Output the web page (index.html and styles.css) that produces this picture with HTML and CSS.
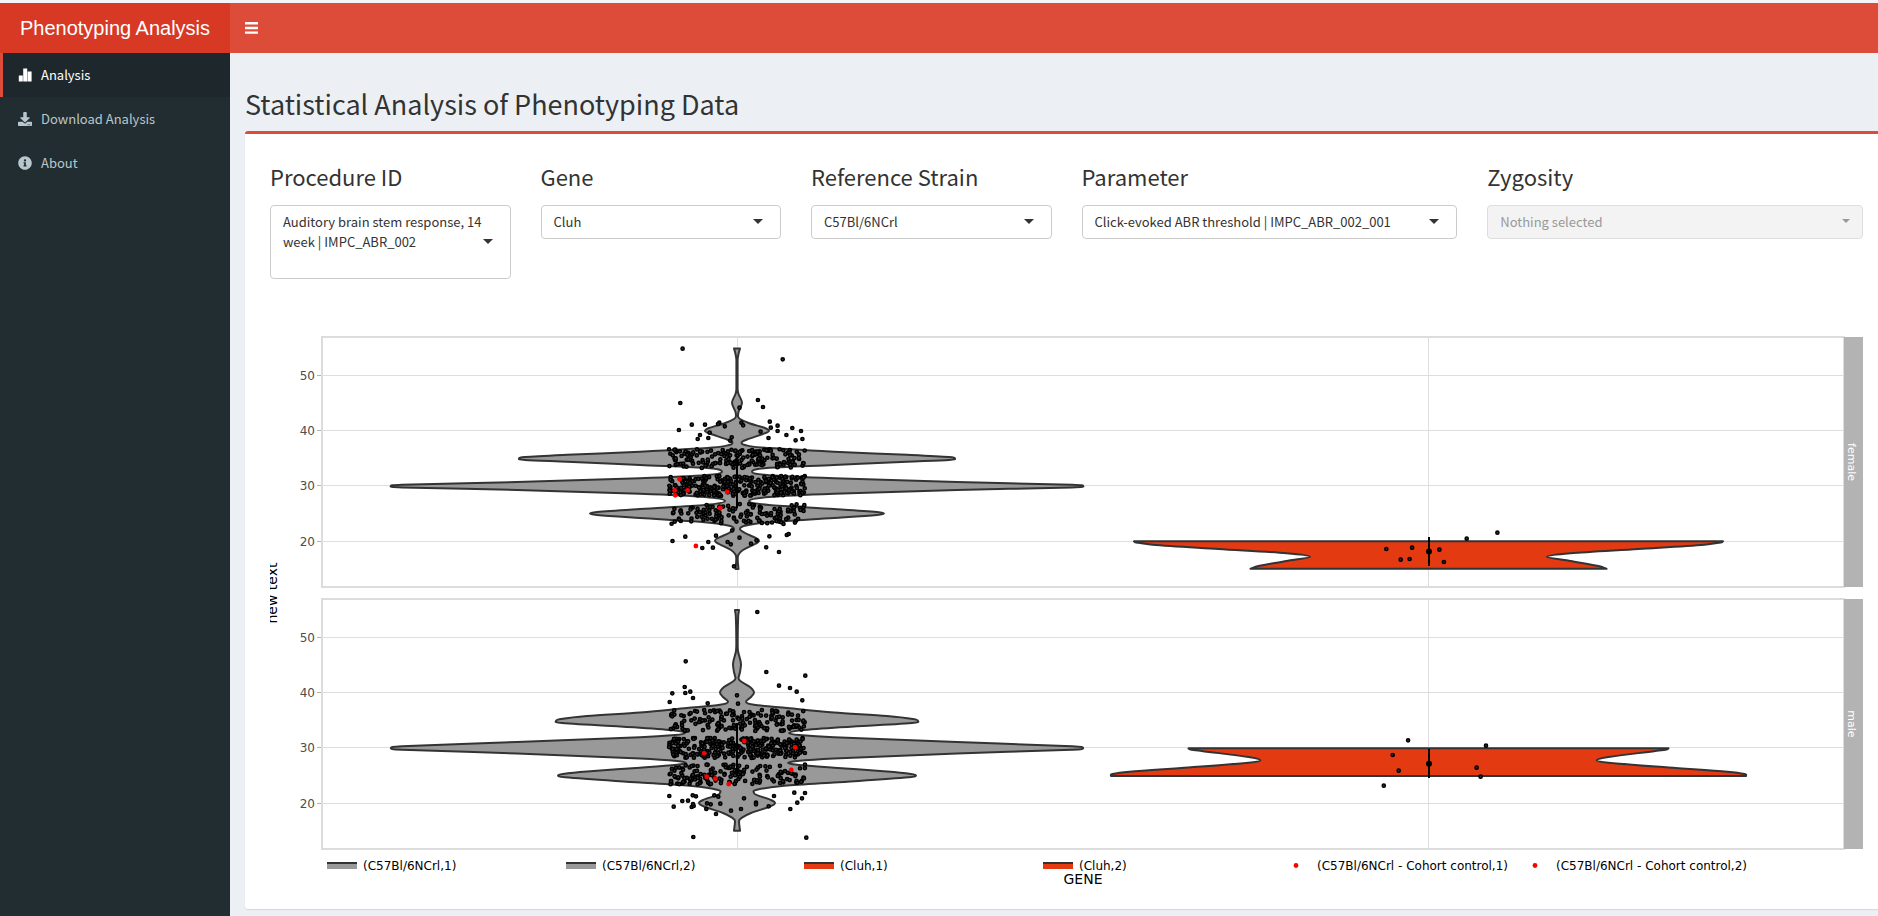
FILE: index.html
```html
<!DOCTYPE html>
<html lang="en">
<head>
<meta charset="utf-8">
<title>Phenotyping Analysis</title>
<link rel="stylesheet" href="styles.css">
</head>
<body>
<header class="topbar">
  <a class="logo" href="#">Phenotyping Analysis</a>
  <button class="toggle" type="button" aria-label="Toggle navigation">
    <svg class="toggle-icon" viewBox="0 0 13 12"><path d="M0 0h13v2.4H0zM0 4.8h13v2.4H0zM0 9.4h13v2.4H0z"/></svg>
  </button>
</header>
<div class="layout">
  <nav class="sidebar">
    <a class="nav-item active" href="#">
      <svg class="nav-icon" viewBox="0 0 14 14"><path d="M0.8 7.5h4v6h-4zM5.2 0.5h4v13h-4zM9.6 3.5h4v10h-4z"/></svg>Analysis</a>
    <a class="nav-item" href="#">
      <svg class="nav-icon" viewBox="0 0 512 512"><path d="M216 0h80c13.3 0 24 10.7 24 24v168h87.7c17.8 0 26.7 21.5 14.1 34.1L269.7 378.3c-7.5 7.5-19.8 7.5-27.3 0L90.1 226.1c-12.6-12.6-3.7-34.1 14.1-34.1H192V24c0-13.3 10.7-24 24-24zm296 376v112c0 13.3-10.7 24-24 24H24c-13.3 0-24-10.7-24-24V376c0-13.3 10.7-24 24-24h146.7l49 49c20.1 20.1 52.5 20.1 72.6 0l49-49H488c13.3 0 24 10.7 24 24zm-124 88c0-11-9-20-20-20s-20 9-20 20 9 20 20 20 20-9 20-20zm64 0c0-11-9-20-20-20s-20 9-20 20 9 20 20 20 20-9 20-20z"/></svg>Download Analysis</a>
    <a class="nav-item" href="#">
      <svg class="nav-icon" viewBox="0 0 512 512"><path d="M256 8C119.043 8 8 119.083 8 256c0 136.997 111.043 248 248 248s248-111.003 248-248C504 119.083 392.957 8 256 8zm0 110c23.196 0 42 18.804 42 42s-18.804 42-42 42-42-18.804-42-42 18.804-42 42-42zm56 254c0 6.627-5.373 12-12 12h-88c-6.627 0-12-5.373-12-12v-24c0-6.627 5.373-12 12-12h12v-64h-12c-6.627 0-12-5.373-12-12v-24c0-6.627 5.373-12 12-12h64c6.627 0 12 5.373 12 12v100h12c6.627 0 12 5.373 12 12v24z"/></svg>About</a>
  </nav>
  <main class="content">
    <h1 class="page-title">Statistical Analysis of Phenotyping Data</h1>
    <section class="box">
      <form class="filters">
        <div class="field">
          <label class="field-label" for="procedure">Procedure ID</label>
          <div class="picker picker-tall">
            <select class="picker-control" id="procedure"><option>Auditory brain stem response, 14 week | IMPC_ABR_002</option></select>
          </div>
        </div>
        <div class="field">
          <label class="field-label" for="gene">Gene</label>
          <div class="picker">
            <select class="picker-control" id="gene"><option>Cluh</option></select>
          </div>
        </div>
        <div class="field">
          <label class="field-label" for="strain">Reference Strain</label>
          <div class="picker">
            <select class="picker-control" id="strain"><option>C57Bl/6NCrl</option></select>
          </div>
        </div>
        <div class="field">
          <label class="field-label" for="parameter">Parameter</label>
          <div class="picker">
            <select class="picker-control" id="parameter"><option>Click-evoked ABR threshold | IMPC_ABR_002_001</option></select>
          </div>
        </div>
        <div class="field">
          <label class="field-label" for="zygosity">Zygosity</label>
          <div class="picker picker-disabled">
            <select class="picker-control" id="zygosity" disabled><option>Nothing selected</option></select>
          </div>
        </div>
      </form>
      <svg class="chart" id="chart" viewBox="270 320 1593 575" role="img" aria-label="Violin plot by gene and sex"></svg>
    </section>
  </main>
</div>
<script src="chart.js"></script>
</body>
</html>
```
FILE: styles.css
```css
* { box-sizing: border-box; }

body {
  margin: 0;
  min-height: 100vh;
  display: flex;
  flex-direction: column;
  background: #ecf0f5;
  color: #333;
  font-family: "Noto Sans CJK SC", "Noto Sans", sans-serif;
  font-size: 13px;
  line-height: 20px;
}

.topbar {
  display: flex;
  height: 53px;
  border-top: 3px solid #f3f5f8;
  background: #dd4b39;
}

.logo {
  width: 230px;
  background: #d73925;
  color: #fff;
  font-family: "Liberation Sans", Arial, sans-serif;
  font-size: 20px;
  line-height: 50px;
  text-align: center;
  text-decoration: none;
}

.toggle {
  display: flex;
  align-items: center;
  padding: 0 15px;
  border: 0;
  background: transparent;
}

.toggle-icon { width: 13px; height: 12px; fill: #fff; }

.layout { display: flex; flex: 1; }

.sidebar { width: 230px; flex-shrink: 0; background: #222d32; }

.nav-item {
  display: flex;
  align-items: center;
  gap: 9px;
  height: 44px;
  padding-left: 15px;
  border-left: 3px solid transparent;
  color: #b8c7ce;
  text-decoration: none;
}

.nav-item.active { border-left-color: #dd4b39; background: #1e282c; color: #fff; }

.nav-icon { width: 14px; height: 14px; fill: currentColor; }

.content { flex: 1; min-width: 0; padding: 31px 0 6px 15px; }

.page-title {
  margin: 0 0 7px;
  font-size: 27px;
  font-weight: 400;
  line-height: 40px;
}

.box {
  padding: 25px 0 13px 10px;
  border-top: 3px solid #dd4b39;
  border-radius: 3px 0 0 3px;
  background: #fff;
  box-shadow: 0 1px 1px rgba(0, 0, 0, 0.1);
}

.filters {
  display: grid;
  grid-template-columns: 2fr 2fr 2fr 3fr 3fr;
  align-items: start;
}

.field { min-width: 0; padding: 0 15px; }

.field-label {
  display: block;
  margin-bottom: 12px;
  font-size: 22px;
  line-height: 34px;
}

.picker { position: relative; }

.picker::after {
  content: "";
  position: absolute;
  top: 14px;
  right: 18px;
  border: 5px solid transparent;
  border-top-color: #333;
  border-bottom: 0;
  pointer-events: none;
}

.picker-control {
  display: block;
  width: 100%;
  height: 34px;
  padding: 6px 34px 6px 12px;
  border: 1px solid #ccc;
  border-radius: 4px;
  appearance: none;
  background: #fff;
  color: #333;
  font: inherit;
  white-space: normal;
}

.picker-tall::after { top: 34px; }

.picker-tall .picker-control { height: 74px; padding: 6px 28px 26px 12px; }

.picker-disabled::after { right: 13px; border-width: 4px 4px 0; border-top-color: #999; }

.picker-disabled .picker-control {
  border-color: #ddd;
  background: #f3f3f3;
  color: #999;
  opacity: 1;
}

.chart {
  display: block;
  width: calc(100% - 30px);
  margin: 42px 15px 0;
  font-family: "DejaVu Sans", Verdana, sans-serif;
  font-size: 12px;
}

.grid { stroke: #dedede; stroke-width: 1; }
.frame { fill: none; stroke: #dcdcdc; stroke-width: 2; }
.tick { stroke: #b3b3b3; stroke-width: 1; }
.tick-label { fill: #4d4d4d; text-anchor: end; }
.strip { fill: #b3b3b3; }
.strip-label { fill: #fff; font-size: 11px; text-anchor: middle; }
.axis-title { fill: #000; font-size: 14px; text-anchor: middle; }
.violin { stroke: #333; stroke-width: 2; stroke-linejoin: round; }
.violin-ref { fill: #999; }
.violin-gene { fill: #e33a12; }
.dot { fill: #333; stroke: #000; stroke-width: 1.5; }
.dot-cohort { fill: #f00; }
.dot-mean { fill: #000; }
.interval { stroke: #000; stroke-width: 2; }
.key-line { stroke: #333; stroke-width: 2; }
.legend-label { fill: #000; }
```
FILE: chart.js
```js
const chart = document.getElementById("chart");

function add(tag, attrs, text) {
  const el = document.createElementNS("http://www.w3.org/2000/svg", tag);
  for (const key in attrs) el.setAttribute(key, attrs[key]);
  if (text) el.textContent = text;
  chart.appendChild(el);
}

const LEFT = 322, RIGHT = 1844, REF_X = 737, GENE_X = 1428.5;

// Outlines are [half width, y] pairs from top to bottom.
const panels = [
  {
    name: "female", top: 336, bottom: 586, base: 540.5, labelY: 461,
    ref: [[3,347.5],[1.5,353],[.6,359],[.6,388],[1.5,393],[5,401.7],[1.5,411],[1,415],[3,418],[13,422.5],[28,427],[32,430],[26,433],[10,438.5],[4.5,441.7],[8,444],[24,446.5],[97,450.7],[170,453.8],[212,456],[218,457.5],[212,459],[170,460.7],[97,464],[30,467],[15,470.7],[30,474],[97,477.3],[220,481],[335,483.8],[346,485],[335,486.4],[220,489],[97,492.7],[32,496],[12,500],[32,504],[97,508],[140,511],[147,512.5],[140,514],[97,517],[35,521],[9,524.5],[3,528],[8,532],[20,537.5],[22,540],[18,543],[6,549],[1.5,553.5],[.7,558],[1.5,568]],
    gene: [[294.5,540.3],[292,541.5],[276,543.7],[210,548],[142,552.3],[118.5,555.8],[142,560],[170,565],[178,567.8]],
    refInterval: [455, 507], geneInterval: [536, 565], mean: 550.5,
    bands: [[448,467,175],[475,495,280],[503,523,130]],
    dots: [[682.6,347.7],[782.7,358.3],[680.3,402],[757.9,399],[763,406],[739.5,406.7],[691.8,423.7],[678.9,429],[705,423.7],[719.3,421.7],[718,423],[724.8,425.3],[709.7,431.7],[700,434],[697.7,438],[708.3,437],[731.7,436.3],[730.3,439.7],[741.4,421.7],[743.2,424.3],[769.8,420.7],[770.8,426.7],[777.6,424.7],[777.6,430],[760.6,430.7],[768.5,437],[786.4,434],[792.3,427],[801,430],[795.6,439.3],[802.4,438],[732.2,529.3],[716,534.7],[685.3,535.7],[672.5,540],[708.3,541],[727.6,541],[730.8,543.3],[739.5,536.7],[756.5,539.3],[751,542.7],[769.4,535.3],[766.2,546.3],[779,551],[786.8,534],[788.7,533],[702.3,547],[712.9,546.7],[734,565.3]],
    cohort: [[679.8,478],[674.8,489.3],[687.6,489.3],[675.2,494.3],[727.1,491],[720.2,507],[695.9,545]],
    geneDots: [[1386.3,548],[1412.1,546.7],[1439.4,548.7],[1400.7,558.7],[1409.6,558],[1443.9,561],[1466.7,537.7],[1497.4,531.7]]
  },
  {
    name: "male", top: 598, bottom: 848, base: 802.5, labelY: 723,
    ref: [[2,609],[1.2,615],[.7,638],[1,650],[4,663.3],[3,671],[1.5,677.5],[4,680.5],[13,686],[17,691.5],[14,696],[9,700.7],[17,703.8],[50,707],[97,711.5],[150,715],[176,718],[181,720],[175,722],[97,726.7],[62,729.5],[52,732.3],[62,734],[97,736.3],[220,741],[335,745.3],[346,747],[335,748.7],[220,752.5],[97,757.5],[60,760],[51,762],[60,763.7],[97,766.7],[150,770.5],[174,773],[179,774.5],[172,776.3],[97,781.5],[45,785],[19,789],[17,792],[34,799],[38,802],[33,805.5],[14,812],[5,816.7],[2,820],[3,829.7]],
    gene: [[240,747.3],[238,748.5],[227,750],[180,756],[168,759.3],[180,761.7],[240,766.5],[299,770.7],[316,773],[317.5,775]],
    refInterval: [722, 772], geneInterval: [748, 777], mean: 762.7,
    bands: [[709,730,155],[737,757,280],[763.5,784,150]],
    dots: [[757.3,611],[685.7,660.3],[766.3,671],[805.3,674.7],[779,684.7],[790,687],[796.7,690.7],[802.3,699.3],[684.7,686],[685.3,692],[690.3,690.7],[672.3,692.3],[669.7,701],[693,697],[707.7,702.3],[737,694.3],[738,702.7],[669.3,795],[673.7,805.7],[682.3,800],[688,799.7],[692.7,794.3],[696,795.3],[691.7,806],[693.7,805],[693,803],[707,802.3],[710.7,803.3],[706.3,808],[716,813],[714.3,794.3],[718.3,795.7],[720.3,802.7],[731,809.7],[741,808],[744,797.3],[756,801.7],[756,803.3],[768.7,805.3],[774,795],[790.3,808],[797.3,801.7],[802,797.3],[794.3,791.7],[805,792],[693.3,836],[806.3,836.7]],
    cohort: [[744.3,740],[704.3,752.3],[795,746.3],[791.3,769],[706.7,775.7],[715.3,777.7],[728.7,783]],
    geneDots: [[1408.1,739.3],[1486,744.7],[1392.7,754],[1398.7,769.7],[1476.6,766.7],[1480.6,775.7],[1383.8,784.7]]
  }
];

// Repeatable jitter, so the cloud is the same on each load.
let seed = 20240;
function random() {
  seed = (seed * 1664525 + 1013904223) % 4294967296;
  return seed / 4294967296;
}

// Smooth curve through the points.
function curve(points) {
  let d = "";
  for (let i = 0; i < points.length - 1; i++) {
    const a = points[Math.max(i - 1, 0)], b = points[i], c = points[i + 1], e = points[Math.min(i + 2, points.length - 1)];
    const dy = (c[1] - b[1]) / 3;
    const tangent = (p, q, r) => (q[0] - p[0]) * (r[0] - q[0]) <= 0 ? 0 : (r[0] - p[0]) / (r[1] - p[1]);
    const m0 = i === 0 ? (c[0] - b[0]) / (c[1] - b[1]) : tangent(a, b, c);
    const m1 = i === points.length - 2 ? (c[0] - b[0]) / (c[1] - b[1]) : tangent(b, c, e);
    d += `C${b[0] + m0 * dy} ${b[1] + dy} ${c[0] - m1 * dy} ${c[1] - dy} ${c[0]} ${c[1]}`;
  }
  return d;
}

function violin(x, outline, kind) {
  const right = outline.map(p => [x + p[0], p[1]]);
  const left = outline.map(p => [x - p[0], p[1]]).reverse();
  const d = `M${right[0]}${curve(right)}L${left[0]}${curve(left)}Z`;
  add("path", { d, class: "violin violin-" + kind });
}

function dots(points, kind, r) {
  points.forEach(p => add("circle", { cx: p[0], cy: p[1], r, class: kind }));
}

panels.forEach(p => {
  for (let v = 20; v <= 50; v += 10) {
    const y = Math.round(p.base - (v - 20) * 5.53) - 0.5;
    add("line", { x1: LEFT, x2: RIGHT, y1: y, y2: y, class: "grid" });
    add("line", { x1: LEFT - 5, x2: LEFT - 1, y1: y, y2: y, class: "tick" });
    add("text", { x: LEFT - 7, y: y + 4, class: "tick-label" }, String(v));
  }
  [REF_X + 0.5, GENE_X].forEach(x => add("line", { x1: x, x2: x, y1: p.top, y2: p.bottom, class: "grid" }));
  add("rect", { x: LEFT, y: p.top, width: RIGHT - LEFT, height: p.bottom - p.top, class: "frame" });
  add("rect", { x: RIGHT, y: p.top, width: 19, height: p.bottom - p.top, class: "strip" });
  add("text", { transform: `translate(1848 ${p.labelY}) rotate(90)`, class: "strip-label" }, p.name);

  violin(REF_X, p.ref, "ref");
  violin(GENE_X, p.gene, "gene");
  p.bands.forEach(([y0, y1, count]) => {
    const cloud = Array.from({ length: count }, () => [669 + random() * 136, y0 + random() * (y1 - y0)]);
    dots(cloud, "dot", 1.6);
  });
  dots(p.dots, "dot", 1.6);
  dots(p.geneDots, "dot", 1.6);
  dots(p.cohort, "dot-cohort", 2.4);
  add("line", { x1: REF_X, x2: REF_X, y1: p.refInterval[0], y2: p.refInterval[1], class: "interval" });
  add("line", { x1: GENE_X + 0.5, x2: GENE_X + 0.5, y1: p.geneInterval[0], y2: p.geneInterval[1], class: "interval" });
  dots([[GENE_X + 0.5, p.mean]], "dot-mean", 3);
});

[["(C57Bl/6NCrl,1)", "ref"], ["(C57Bl/6NCrl,2)", "ref"], ["(Cluh,1)", "gene"], ["(Cluh,2)", "gene"]].forEach(([label, kind], i) => {
  const x = 327 + Math.round(i * 238.5);
  add("rect", { x, y: 861, width: 30, height: 7, class: "violin-" + kind });
  add("line", { x1: x, x2: x + 30, y1: 862, y2: 862, class: "key-line" });
  add("text", { x: x + 36, y: 869, class: "legend-label" }, label);
});
["(C57Bl/6NCrl - Cohort control,1)", "(C57Bl/6NCrl - Cohort control,2)"].forEach((label, i) => {
  const x = 1296 + i * 239;
  add("circle", { cx: x, cy: 864.5, r: 2.4, class: "dot-cohort" });
  add("text", { x: x + 21, y: 869, class: "legend-label" }, label);
});

add("text", { x: 1083, y: 883, class: "axis-title" }, "GENE");
add("text", { transform: "translate(277 592) rotate(-90)", class: "axis-title" }, "new text");
```
